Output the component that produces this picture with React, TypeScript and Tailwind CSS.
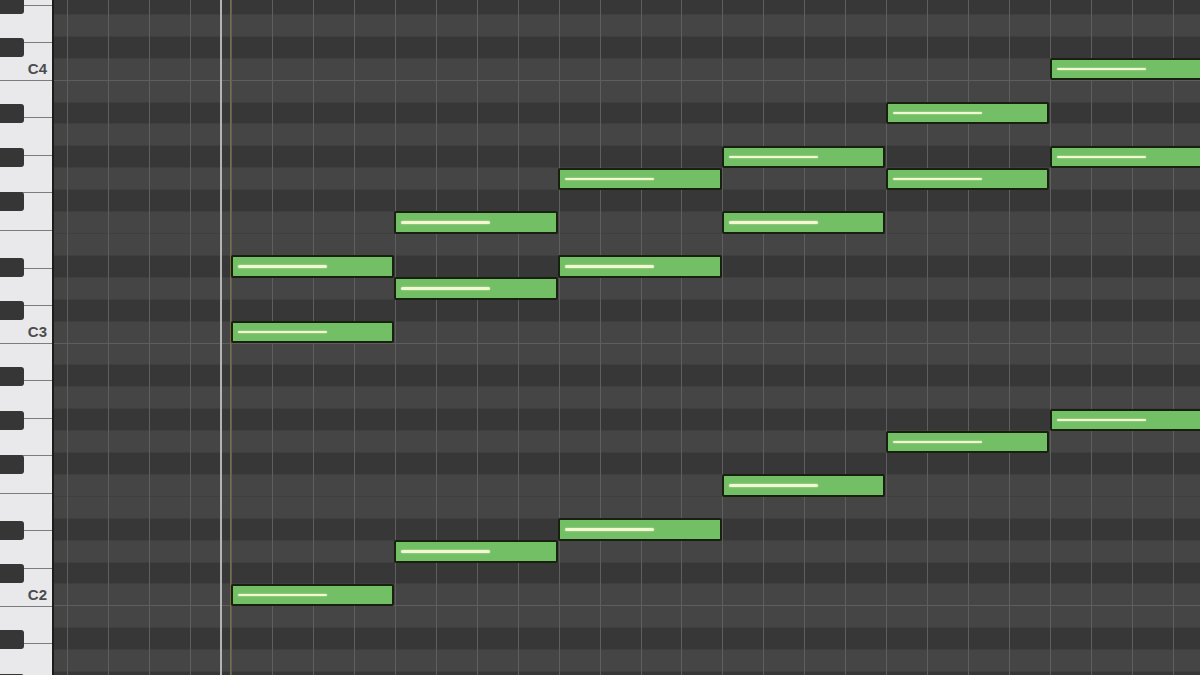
const ROW = 263 / 12;
const C4_BOTTOM = 80.7;
const BEAT = 163.8 / 4;
const GRID_LEFT = 54;
const BLACK = [1, 3, 6, 8, 10];
const NAMES = ['C', 'D', 'E', 'F', 'G', 'A', 'B'];

const rowTop = (m: number) => C4_BOTTOM + (59 - m) * ROW;

// notes: midi pitch + bar index (0..5)
const notes: { m: number; bar: number }[] = [
  { m: 51, bar: 0 }, { m: 48, bar: 0 }, { m: 36, bar: 0 },
  { m: 53, bar: 1 }, { m: 50, bar: 1 }, { m: 38, bar: 1 },
  { m: 55, bar: 2 }, { m: 51, bar: 2 }, { m: 39, bar: 2 },
  { m: 56, bar: 3 }, { m: 53, bar: 3 }, { m: 41, bar: 3 },
  { m: 58, bar: 4 }, { m: 55, bar: 4 }, { m: 43, bar: 4 },
  { m: 60, bar: 5 }, { m: 56, bar: 5 }, { m: 44, bar: 5 },
];

const rows = Array.from({ length: 33 }, (_, i) => 64 - i);
// white keys from E4 downwards
const whites = Array.from({ length: 20 }, (_, i) => {
  const idx = 2 - i; // E4 = index 2 in octave 4
  const oct = 4 + Math.floor(idx / 7);
  const n = ((idx % 7) + 7) % 7;
  return { name: NAMES[n], oct };
});

export default function App() {
  return (
    <div className="flex w-[1200px] h-[675px] overflow-hidden bg-[#3f3f3f]" style={{ fontFamily: '"Liberation Sans", Arial, sans-serif' }}>
      {/* keyboard */}
      <div className="relative w-[54px] shrink-0 overflow-hidden bg-[#e9e9eb] border-r-2 border-[#1c1c1c]">
        <div className="flex flex-col mt-[-32px]">
          {whites.map((w, i) => (
            <div key={i} className="h-[37.571px] shrink-0 border-b border-[#7c7c7c] flex items-end justify-end pr-[5px] pb-[4px]">
              {w.name === 'C' && (
                <span className="text-[15px] font-bold leading-none text-[#4c4c4e]">C{w.oct}</span>
              )}
            </div>
          ))}
        </div>
        {rows.filter((m) => BLACK.includes(m % 12)).map((m) => (
          <div
            key={m}
            className="absolute left-0 w-[24px] h-[19px] rounded-r-[3px] bg-[#363636]"
            style={{ top: rowTop(m) + 1.5 }}
          />
        ))}
      </div>

      {/* grid */}
      <div className="relative flex-1 overflow-hidden">
        <div className="flex flex-col mt-[-28.9px]">
          {rows.map((m) => (
            <div
              key={m}
              className={`h-[21.917px] shrink-0 border-b ${
                BLACK.includes(m % 12) ? 'bg-[#373737]' : 'bg-[#454545]'
              } ${m % 12 === 0 ? 'border-[#5e5e5e]' : 'border-[#3f3f3f]'}`}
            />
          ))}
        </div>

        {Array.from({ length: 30 }, (_, k) => 231 + (k - 5) * BEAT)
          .filter((x) => x > GRID_LEFT)
          .map((x, i) => (
            <div key={i} className="absolute top-0 bottom-0 w-px bg-[#5e5e5e]" style={{ left: x - GRID_LEFT }} />
          ))}

        <div className="absolute top-0 bottom-0 w-[2px] bg-[#b4b4b4]" style={{ left: 220 - GRID_LEFT }} />
        <div className="absolute top-0 bottom-0 w-px bg-[#7d6c3c]" style={{ left: 230 - GRID_LEFT }} />

        {notes.map((n, i) => (
          <div
            key={i}
            className="absolute h-[22.5px] rounded-[2px] border-2 border-[#18200f] bg-[#72bf65] flex items-center"
            style={{ left: 230.5 + n.bar * 163.8 - GRID_LEFT, top: rowTop(n.m) - 0.8, width: 163.5 }}
          >
            <div className="ml-[5px] w-[89px] h-[2.5px] rounded-full bg-[#f3f7d2] shadow-[0_0_2px_rgba(240,250,200,0.7)]" />
          </div>
        ))}
      </div>
    </div>
  );
}
